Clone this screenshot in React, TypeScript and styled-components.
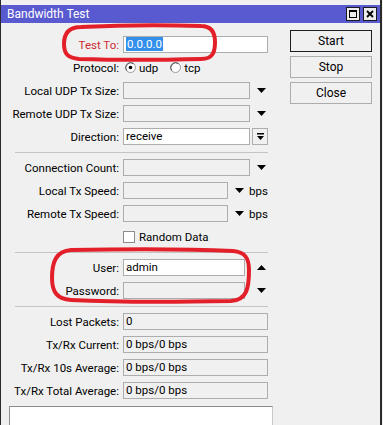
import React from 'react';
import styled, { createGlobalStyle } from 'styled-components';

const GlobalStyle = createGlobalStyle`
  html, body {
    margin: 0;
    padding: 0;
    background: #f0f0f0;
    overflow: hidden;
  }
  body {
    font-family: Roboto, "Liberation Sans", Arial, sans-serif;
    font-size: 11.5px;
    color: #000;
  }
`;

const Window = styled.div`
  position: relative;
  width: 382px;
  height: 425px;
  box-sizing: border-box;
  border-left: 1px solid #2a2a2a;
  border-right: 2px solid #2a2a2a;
  padding-top: 5px;
  background: #f0f0f0;
  overflow: hidden;
`;

const TitleBar = styled.div`
  height: 18px;
  background: #5a5ad0;
  display: flex;
  align-items: center;
  padding: 0 3px 0 6px;
`;

const Title = styled.span`
  flex: 1;
  color: #fff;
  font-size: 12px;
`;

const TitleButtons = styled.div`
  display: flex;
  gap: 3px;
`;

const TitleButton = styled.div`
  width: 14px;
  height: 14px;
  box-sizing: border-box;
  border: 1px solid #1a1a1a;
  background: #ececec;
  display: flex;
  align-items: center;
  justify-content: center;
`;

const Body = styled.div`
  display: flex;
  align-items: flex-start;
`;

const Form = styled.div`
  width: 279px;
  padding: 13px 0 0 2px;
  box-sizing: border-box;
  display: flex;
  flex-direction: column;
`;

const Row = styled.div`
  display: grid;
  grid-template-columns: 116px 1fr;
  column-gap: 4px;
  height: 17px;
  margin-bottom: 6px;
  align-items: center;
`;

const Label = styled.label<{ $accent?: boolean }>`
  text-align: right;
  white-space: nowrap;
  color: ${(p) => (p.$accent ? '#cc2a30' : '#000')};
`;

const Controls = styled.div`
  display: flex;
  align-items: center;
  height: 17px;
`;

const Field = styled.div<{ $width: number; $white?: boolean }>`
  width: ${(p) => p.$width}px;
  height: 17px;
  box-sizing: border-box;
  border: 1px solid #adadad;
  background: ${(p) => (p.$white ? '#fff' : '#f0f0f0')};
  padding-left: 2px;
  line-height: 15px;
  white-space: nowrap;
  overflow: hidden;
`;

const Selected = styled.span`
  background: #3390ea;
  color: #fff;
  padding: 0 1px;
`;

const Arrow = styled.span<{ $gap?: number }>`
  display: inline-flex;
  margin-left: ${(p) => p.$gap ?? 7}px;
  width: 9px;
  justify-content: center;
`;

const Unit = styled.span`
  margin-left: 5px;
`;

const SmallButton = styled.div`
  width: 16px;
  height: 17px;
  margin-left: 2px;
  box-sizing: border-box;
  border: 1px solid #adadad;
  background: #f0f0f0;
  display: flex;
  align-items: center;
  justify-content: center;
`;

const RadioGroup = styled.div`
  display: flex;
  align-items: center;
  padding-left: 2px;
`;

const RadioItem = styled.span`
  display: inline-flex;
  align-items: center;
  gap: 3px;
  margin-right: 12px;
`;

const CheckItem = styled.span`
  display: inline-flex;
  align-items: center;
  gap: 4px;
`;

const CheckBox = styled.span`
  width: 12px;
  height: 12px;
  box-sizing: border-box;
  border: 1px solid #8c8c8c;
  background: #fff;
`;

const Separator = styled.div`
  margin: 1px 0 6px 12px;
  width: 253px;
  height: 1px;
  background: #c4c4c4;
`;

const TextArea = styled.div`
  margin: 1px 0 0 6px;
  width: 264px;
  height: 60px;
  box-sizing: border-box;
  border: 1px solid #8c8c8c;
  border-right-color: #c8c8c8;
  background: #fff;
`;

const ButtonColumn = styled.div`
  margin-left: 10px;
  padding-top: 7px;
  display: flex;
  flex-direction: column;
  gap: 4px;
`;

const Button = styled.div<{ $default?: boolean }>`
  width: 82px;
  height: 22px;
  box-sizing: border-box;
  border: 1px solid ${(p) => (p.$default ? '#1e1e1e' : '#adadad')};
  background: #f0f0f0;
  display: flex;
  align-items: center;
  justify-content: center;
  font-size: 12px;
`;

const Overlay = styled.svg`
  position: absolute;
  left: 0;
  top: 0;
  pointer-events: none;
`;

function DownArrow() {
  return (
    <svg width="9" height="5" viewBox="0 0 9 5">
      <path d="M0 0h9L4.5 5z" fill="#000" />
    </svg>
  );
}

function UpArrow() {
  return (
    <svg width="9" height="5" viewBox="0 0 9 5">
      <path d="M0 5h9L4.5 0z" fill="#000" />
    </svg>
  );
}

function Radio({ checked }: { checked?: boolean }) {
  return (
    <svg width="11" height="11" viewBox="0 0 11 11">
      <circle cx="5.5" cy="5.5" r="5" fill="#fff" stroke="#9a9a9a" />
      <path d="M1.6 8.5A5 5 0 0 1 8.5 1.6" fill="none" stroke="#555" strokeWidth="1" />
      {checked && <circle cx="5.5" cy="5.5" r="1.8" fill="#000" />}
    </svg>
  );
}

type FieldRowProps = {
  label: string;
  width: number;
  white?: boolean;
  value?: React.ReactNode;
  accent?: boolean;
  extra?: React.ReactNode;
};

function FieldRow({ label, width, white, value, accent, extra }: FieldRowProps) {
  return (
    <Row>
      <Label $accent={accent}>{label}:</Label>
      <Controls>
        <Field $width={width} $white={white}>{value}</Field>
        {extra}
      </Controls>
    </Row>
  );
}

function App() {
  return (
    <>
      <GlobalStyle />
      <Window>
        <TitleBar>
          <Title>Bandwidth Test</Title>
          <TitleButtons>
            <TitleButton>
              <svg width="8" height="8" viewBox="0 0 8 8">
                <rect x="0.5" y="0.5" width="7" height="7" fill="none" stroke="#000" />
                <rect x="0" y="0" width="8" height="2" fill="#000" />
              </svg>
            </TitleButton>
            <TitleButton>
              <svg width="8" height="8" viewBox="0 0 8 8">
                <path d="M1 1l6 6M7 1L1 7" stroke="#000" strokeWidth="1.8" />
              </svg>
            </TitleButton>
          </TitleButtons>
        </TitleBar>

        <Body>
          <Form>
            <FieldRow label="Test To" accent width={145} white value={<Selected>0.0.0.0</Selected>} />
            <Row>
              <Label>Protocol:</Label>
              <RadioGroup>
                <RadioItem><Radio checked />udp</RadioItem>
                <RadioItem><Radio />tcp</RadioItem>
              </RadioGroup>
            </Row>
            <FieldRow label="Local UDP Tx Size" width={127} extra={<Arrow><DownArrow /></Arrow>} />
            <FieldRow label="Remote UDP Tx Size" width={127} extra={<Arrow><DownArrow /></Arrow>} />
            <FieldRow
              label="Direction"
              width={127}
              white
              value="receive"
              extra={
                <SmallButton>
                  <svg width="7" height="8" viewBox="0 0 7 8">
                    <rect x="0" y="0" width="7" height="1.5" fill="#000" />
                    <path d="M0 3h7L3.5 7z" fill="#000" />
                  </svg>
                </SmallButton>
              }
            />
            <Separator />
            <FieldRow label="Connection Count" width={127} extra={<Arrow><DownArrow /></Arrow>} />
            <FieldRow
              label="Local Tx Speed"
              width={105}
              extra={<><Arrow><DownArrow /></Arrow><Unit>bps</Unit></>}
            />
            <FieldRow
              label="Remote Tx Speed"
              width={105}
              extra={<><Arrow><DownArrow /></Arrow><Unit>bps</Unit></>}
            />
            <Row>
              <span />
              <CheckItem><CheckBox />Random Data</CheckItem>
            </Row>
            <Separator />
            <FieldRow label="User" width={122} white value="admin" extra={<Arrow $gap={12}><UpArrow /></Arrow>} />
            <FieldRow label="Password" width={122} extra={<Arrow $gap={12}><DownArrow /></Arrow>} />
            <Separator />
            <FieldRow label="Lost Packets" width={145} value="0" />
            <FieldRow label="Tx/Rx Current" width={145} value="0 bps/0 bps" />
            <FieldRow label="Tx/Rx 10s Average" width={145} value="0 bps/0 bps" />
            <FieldRow label="Tx/Rx Total Average" width={145} value="0 bps/0 bps" />
            <TextArea />
          </Form>

          <ButtonColumn>
            <Button $default>Start</Button>
            <Button>Stop</Button>
            <Button>Close</Button>
          </ButtonColumn>
        </Body>

        <Overlay width="382" height="425" viewBox="0 0 382 425">
          <path
            d="M80 27 C120 25 170 25 200 26 C210 26 214 32 214 42 C214 52 212 59 200 59 C160 60 110 60 78 59 C67 58 63 54 63 44 C63 33 68 27 80 27 Z"
            fill="none"
            stroke="#e3202a"
            strokeWidth="4"
          />
          <path
            d="M70 250 C120 249 190 249 232 251 C244 252 248 258 248 270 C248 288 246 300 230 301 C180 302 110 302 70 300 C56 299 51 292 51 278 C51 262 55 251 70 250 Z"
            fill="none"
            stroke="#e3202a"
            strokeWidth="4"
          />
        </Overlay>
      </Window>
    </>
  );
}

export default App;
